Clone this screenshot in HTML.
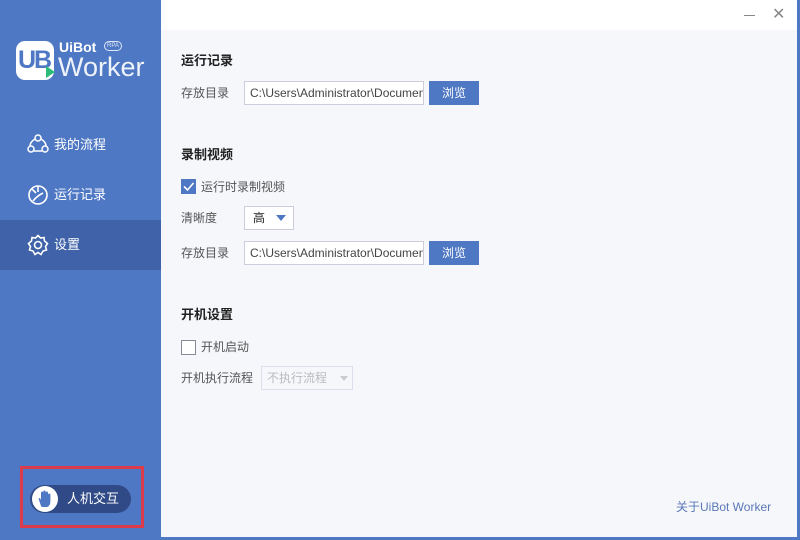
<!DOCTYPE html>
<html><head><meta charset="utf-8"><style>
*{margin:0;padding:0;box-sizing:border-box}
body{width:800px;height:540px;overflow:hidden;background:#4f78c4;font-family:"Liberation Sans","Noto Sans CJK SC",sans-serif;position:relative}
.side{position:absolute;left:0;top:0;width:161px;height:540px;background:#4f78c4}
.main{position:absolute;left:161px;top:0;width:636px;height:537px;background:#f5f7fb}
.top{position:absolute;left:0;top:0;width:636px;height:30px;background:#fff}
.abs{position:absolute}
.nav{position:absolute;left:0;width:161px;height:50px;color:#fff;font-size:13px;line-height:50px;padding-left:54px}
.h{position:absolute;left:20px;font-size:13px;font-weight:bold;color:#222;line-height:16px}
.lbl{position:absolute;font-size:12px;color:#555;line-height:16px}
.inp{position:absolute;background:#fff;border:1px solid #ccd;font-size:12px;color:#444;line-height:22px;padding-left:5px;overflow:hidden;white-space:nowrap}
.btn{position:absolute;background:#4f78c4;color:#fff;font-size:12px;text-align:center;line-height:24px;width:50px;height:24px}
</style></head><body>
<div class="side">
 <div class="abs" style="left:16px;top:41px;width:38px;height:39px;background:#fff;border-radius:9px"></div>
 <div class="abs" style="left:18px;top:44px;font-size:25px;font-weight:bold;color:#4f78c4;letter-spacing:-2px;line-height:32px">UB</div>
 <div class="abs" style="left:46px;top:66px;width:0;height:0;border-left:9px solid #2dbb7a;border-top:6px solid transparent;border-bottom:6px solid transparent"></div>
 <div class="abs" style="left:59px;top:39px;font-size:14px;font-weight:bold;color:#fff;line-height:16px">UiBot</div>
 <div class="abs" style="left:104px;top:41px;font-size:6px;color:#dfe6f5;border:1px solid #dfe6f5;border-radius:5px;padding:0 2px;line-height:8px">RPA</div>
 <div class="abs" style="left:58px;top:52px;font-size:27px;color:rgba(255,255,255,0.9);font-weight:normal;line-height:30px">Worker</div>
 <div class="nav" style="top:120px">我的流程</div>
 <svg class="abs" style="left:27px;top:133px" width="22" height="22" viewBox="0 0 22 22" fill="none" stroke="#fff" stroke-width="1.5"><circle cx="11" cy="5" r="3"/><circle cx="4" cy="16" r="3"/><circle cx="18" cy="16" r="3"/><path d="M8 6 Q3 9 3 13M14 6 Q19 9 19 13M7 18 H15"/></svg>
 <div class="nav" style="top:170px">运行记录</div>
 <svg class="abs" style="left:27px;top:184px" width="22" height="22" viewBox="0 0 22 22" fill="none" stroke="#fff" stroke-width="1.6"><circle cx="11" cy="11" r="9"/><path d="M11 2 V8 M5 5 L9 9 M6 17 Q10 12 16 9"/></svg>
 <div class="nav" style="top:220px;background:#3f62a8">设置</div>
 <svg class="abs" style="left:27px;top:234px" width="22" height="22" viewBox="0 0 22 22" fill="none" stroke="#fff" stroke-width="1.6"><path d="M11 1.5 L13.5 4 17 3.5 17.5 7 20.5 9.5 18.5 12.5 19.5 16 16 17 14 20.5 11 18.5 8 20.5 6 17 2.5 16 3.5 12.5 1.5 9.5 4.5 7 5 3.5 8.5 4Z"/><circle cx="11" cy="11" r="3.5"/></svg>
 <div class="abs" style="left:20px;top:466px;width:124px;height:62px;border:3px solid #dc3b4a"></div>
 <div class="abs" style="left:30px;top:485px;width:101px;height:28px;background:#2f4a86;border-radius:14px"></div>
 <div class="abs" style="left:32px;top:486px;width:26px;height:26px;background:#fff;border-radius:50%"></div>
 <svg class="abs" style="left:37px;top:490px" width="16" height="18" viewBox="0 0 16 18"><path d="M4 16 L2 10 Q1 8 3 8 L4 10 V3 Q4 1.5 5.2 1.5 Q6.2 1.5 6.2 3 V2 Q6.2 0.5 7.4 0.5 Q8.6 0.5 8.6 2 V3 Q8.6 1.5 9.8 1.5 Q11 1.5 11 3 V5 Q11 3.5 12.2 3.5 Q13.4 3.5 13.4 5 V11 Q13.4 16 10 17 H5Z" fill="#4f78c4"/></svg>
 <div class="abs" style="left:67px;top:490px;font-size:13px;color:#fff;line-height:18px">人机交互</div>
</div>
<div class="main">
 <div class="top"></div>
 <div class="abs" style="left:583px;top:15px;width:11px;height:1px;background:#888"></div>
 <div class="abs" style="left:611px;top:7px;font-size:16px;color:#888;line-height:16px">✕</div>
 <div class="h" style="top:53px">运行记录</div>
 <div class="lbl" style="left:20px;top:85px">存放目录</div>
 <div class="inp" style="left:83px;top:81px;width:180px;height:24px">C:\Users\Administrator\Documents</div>
 <div class="btn" style="left:268px;top:81px">浏览</div>
 <div class="h" style="top:147px">录制视频</div>
 <div class="abs" style="left:20px;top:179px;width:15px;height:15px;background:#4f78c4"></div>
 <svg class="abs" style="left:20px;top:179px" width="15" height="15"><path d="M3 7.5 L6.5 11 L12.5 4" stroke="#fff" stroke-width="1.6" fill="none"/></svg>
 <div class="lbl" style="left:40px;top:179px">运行时录制视频</div>
 <div class="lbl" style="left:20px;top:210px">清晰度</div>
 <div class="inp" style="left:83px;top:206px;width:50px;height:24px;padding-left:8px;color:#222">高</div>
 <div class="abs" style="left:115px;top:215px;border-top:6px solid #4f78c4;border-left:5px solid transparent;border-right:5px solid transparent"></div>
 <div class="lbl" style="left:20px;top:245px">存放目录</div>
 <div class="inp" style="left:83px;top:241px;width:180px;height:24px">C:\Users\Administrator\Documents</div>
 <div class="btn" style="left:268px;top:241px">浏览</div>
 <div class="h" style="top:307px">开机设置</div>
 <div class="abs" style="left:20px;top:340px;width:15px;height:15px;background:#fff;border:1px solid #889"></div>
 <div class="lbl" style="left:40px;top:339px">开机启动</div>
 <div class="lbl" style="left:20px;top:370px">开机执行流程</div>
 <div class="inp" style="left:100px;top:366px;width:92px;height:24px;background:#f5f7fb;color:#bbb;border-color:#dde">不执行流程</div>
 <div class="abs" style="left:179px;top:376px;border-top:5px solid #ccc;border-left:4px solid transparent;border-right:4px solid transparent"></div>
 <div class="abs" style="left:515px;top:499px;font-size:12px;color:#5a78b8;line-height:16px">关于UiBot Worker</div>
</div>
</body></html>
